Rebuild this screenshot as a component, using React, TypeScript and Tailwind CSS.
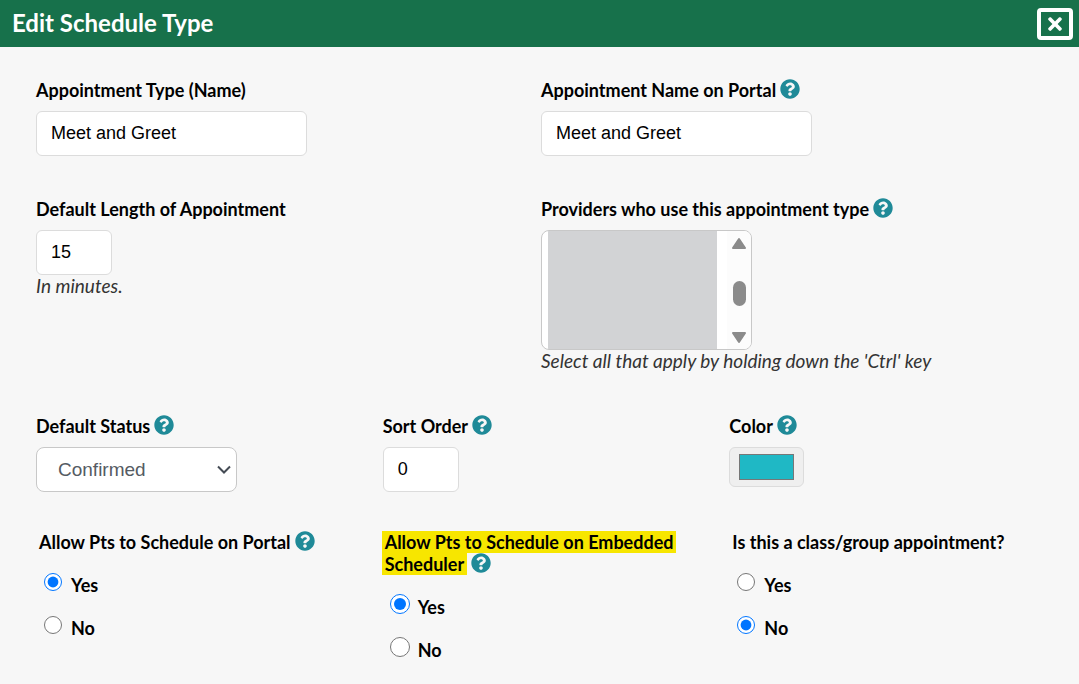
import React from 'react';
import { FaQuestionCircle, FaTimes } from 'react-icons/fa';

const inputClass =
  "block h-[45px] rounded-md border border-[#dcdcdc] bg-white pl-[14px] font-['Liberation_Sans',sans-serif] text-lg text-black";

const HelpButton: React.FC<{ topic: string }> = ({ topic }) => (
  <button type="button" aria-label={`Help: ${topic}`} className="ml-1 inline-block align-top text-[#1f8a98]">
    <FaQuestionCircle size={20} />
  </button>
);

interface FieldProps {
  id: string;
  label: string;
  help?: boolean;
  hint?: string;
  children: React.ReactNode;
}

const Field: React.FC<FieldProps> = ({ id, label, help, hint, children }) => (
  <div>
    <div className="mb-[10px] h-[22px] whitespace-nowrap font-bold">
      <label htmlFor={id}>{label}</label>
      {help && <HelpButton topic={label} />}
    </div>
    {children}
    {hint && <p className="text-[19px] leading-[22px] text-[#333333] italic">{hint}</p>}
  </div>
);

interface YesNoProps {
  name: string;
  label: string;
  defaultValue: 'Yes' | 'No';
  help?: boolean;
  highlight?: boolean;
}

const YesNo: React.FC<YesNoProps> = ({ name, label, defaultValue, help, highlight }) => (
  <fieldset className={highlight ? 'pl-[2px] font-bold' : 'pl-[3px] font-bold'}>
    <legend className={highlight ? 'w-[310px]' : 'whitespace-nowrap'}>
      {highlight ? (
        <mark className="-ml-[3px] box-decoration-clone bg-[#f7e600] px-[3px] text-black">{label}</mark>
      ) : (
        label
      )}
      {help && <HelpButton topic={label} />}
    </legend>
    <div className="mt-[19px] flex flex-col gap-[21px] pl-[5px]">
      {['Yes', 'No'].map((option) => (
        <label key={option} className="flex h-[22px] items-start gap-[9px]">
          <input
            type="radio"
            name={name}
            value={option}
            defaultChecked={option === defaultValue}
            className={highlight ? 'h-5 w-5' : 'mt-px h-[18px] w-[18px]'}
          />
          <span className={highlight ? '-ml-px pt-[2px]' : 'pt-[2px]'}>{option}</span>
        </label>
      ))}
    </div>
  </fieldset>
);

const ProviderList: React.FC = () => (
  <div className="flex h-[120px] w-[211px] overflow-hidden rounded-lg border border-[#c8c8c8] bg-white pl-[6px]">
    <select
      id="providers"
      multiple
      className="h-full w-[169px] appearance-none overflow-hidden bg-[#d2d3d5]"
    />
    <div className="ml-auto flex w-6 flex-col items-center justify-between bg-[#fcfcfc] pt-[6px] pb-[5px] text-[#8b8b8b]">
      <button type="button" aria-label="Scroll up">
        <svg className="block" width="14" height="12" viewBox="0 0 14 12" fill="currentColor" stroke="currentColor" strokeWidth="2" strokeLinejoin="round">
          <path d="M7 2 13 11H1Z" />
        </svg>
      </button>
      <div className="mt-[6px] h-[25px] w-[13px] rounded-full bg-[#8b8b8b]" />
      <button type="button" aria-label="Scroll down">
        <svg className="block" width="14" height="12" viewBox="0 0 14 12" fill="currentColor" stroke="currentColor" strokeWidth="2" strokeLinejoin="round">
          <path d="M7 10 13 1H1Z" />
        </svg>
      </button>
    </div>
  </div>
);

export default function App() {
  return (
    <div className="min-h-screen bg-[#f7f7f7] font-[Lato,sans-serif] text-lg leading-[22px] text-black">
      <header className="flex h-[47px] items-center justify-between bg-[#17714b] pr-[6px] pl-3 text-white">
        <h1 className="pb-[2px] text-2xl font-bold">Edit Schedule Type</h1>
        <button
          type="button"
          aria-label="Close"
          className="flex h-8 w-9 items-center justify-center rounded-[4px] border-4 border-white"
        >
          <FaTimes size={20} />
        </button>
      </header>

      <form className="pt-8 pl-9">
        <div className="grid grid-cols-2 gap-y-[42px] pr-[33px]">
          <Field id="type-name" label="Appointment Type (Name)">
            <input id="type-name" type="text" defaultValue="Meet and Greet" className={`${inputClass} w-[271px]`} />
          </Field>
          <Field id="portal-name" label="Appointment Name on Portal" help>
            <input id="portal-name" type="text" defaultValue="Meet and Greet" className={`${inputClass} w-[271px]`} />
          </Field>
          <Field id="length" label="Default Length of Appointment" hint="In minutes.">
            <input id="length" type="text" defaultValue="15" className={`${inputClass} w-[76px]`} />
          </Field>
          <Field
            id="providers"
            label="Providers who use this appointment type"
            help
            hint="Select all that apply by holding down the 'Ctrl' key"
          >
            <ProviderList />
          </Field>
        </div>

        <div className="mt-[43px] grid grid-cols-3 gap-y-[39px] pr-[3px]">
          <Field id="status" label="Default Status" help>
            <div className="relative w-[201px]">
              <select
                id="status"
                className="block h-[45px] w-full appearance-none rounded-lg border border-[#c8c8c8] bg-white pl-[21px] font-['Liberation_Sans',sans-serif] text-[19px] text-[#555b63]"
              >
                <option>Confirmed</option>
              </select>
              <svg
                className="pointer-events-none absolute top-[18px] right-[6px] text-[#444b54]"
                width="14"
                height="10"
                viewBox="0 0 14 10"
                fill="none"
                stroke="currentColor"
                strokeWidth="2"
              >
                <path d="M1 1.5 7 7.5 13 1.5" />
              </svg>
            </div>
          </Field>
          <Field id="sort-order" label="Sort Order" help>
            <input id="sort-order" type="text" defaultValue="0" className={`${inputClass} w-[76px]`} />
          </Field>
          <Field id="color" label="Color" help>
            <input
              id="color"
              type="color"
              defaultValue="#1fb8c5"
              className="block h-10 w-[75px] rounded-md border border-[#dcdcdc] bg-[#efefef] px-[7px] py-[2px]"
            />
          </Field>

          <YesNo name="portal" label="Allow Pts to Schedule on Portal" defaultValue="Yes" help />
          <YesNo
            name="embedded"
            label="Allow Pts to Schedule on Embedded Scheduler"
            defaultValue="Yes"
            help
            highlight
          />
          <YesNo name="group" label="Is this a class/group appointment?" defaultValue="No" />
        </div>
      </form>
    </div>
  );
}
